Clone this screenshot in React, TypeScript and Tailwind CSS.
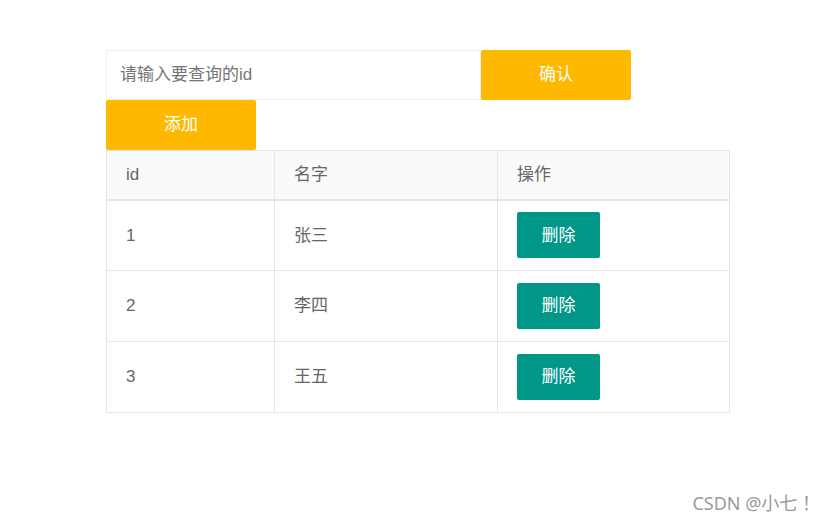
const rows = [
  { id: 1, name: "张三" },
  { id: 2, name: "李四" },
  { id: 3, name: "王五" },
];

export default function App() {
  return (
    <div
      className="relative w-[826px] h-[523px] bg-white text-[#666] text-[17px]"
      style={{ fontFamily: '"Liberation Sans", "Noto Sans CJK SC", sans-serif' }}
    >
      <div className="pt-[50px] pl-[106px] flex flex-col">
        <div className="flex">
          <input
            className="w-[375px] h-[50px] border border-[#eee] px-[13px] outline-none text-[17px] placeholder:text-[#757575]"
            placeholder="请输入要查询的id"
          />
          <button className="w-[150px] h-[50px] bg-[#FFB800] text-white rounded-[2px]">确认</button>
        </div>
        <button className="w-[150px] h-[50px] bg-[#FFB800] text-white rounded-[2px]">添加</button>
        <table className="w-[624px] border-collapse border border-[#e6e6e6]">
          <thead>
            <tr className="h-[49px] bg-[#fafafa] border-b-2 border-[#e6e6e6]">
              <th className="w-[168px] border border-[#e6e6e6] px-[19px] text-left font-normal">id</th>
              <th className="w-[223px] border border-[#e6e6e6] px-[19px] text-left font-normal">名字</th>
              <th className="border border-[#e6e6e6] px-[19px] text-left font-normal">操作</th>
            </tr>
          </thead>
          <tbody>
            {rows.map((r) => (
              <tr key={r.id} className="h-[71px]">
                <td className="border border-[#e6e6e6] px-[19px]">{r.id}</td>
                <td className="border border-[#e6e6e6] px-[19px]">{r.name}</td>
                <td className="border border-[#e6e6e6] px-[19px]">
                  <button className="w-[83px] h-[46px] bg-[#009688] text-white rounded-[2px]">删除</button>
                </td>
              </tr>
            ))}
          </tbody>
        </table>
      </div>
      <div
        className="absolute right-[6px] bottom-[6px] text-[18px] text-[#9a9a9a]"
        style={{ fontFamily: '"Noto Sans", "Noto Sans CJK SC", sans-serif' }}
      >
        CSDN @小七 ！
      </div>
    </div>
  );
}
